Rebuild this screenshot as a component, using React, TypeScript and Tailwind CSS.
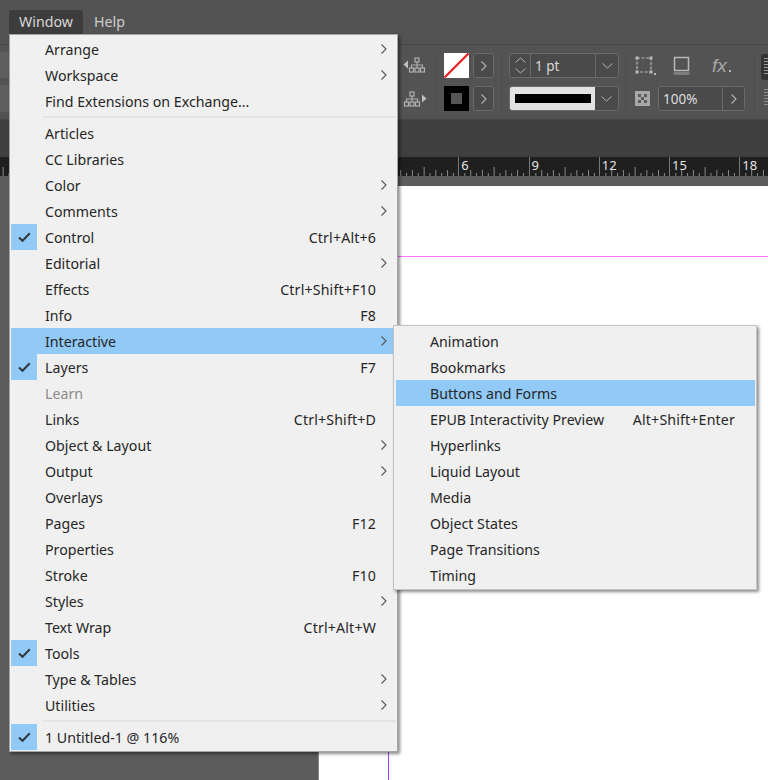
import React from "react";

type Item = { label: string; shortcut?: string; sub?: boolean; checked?: boolean; active?: boolean; disabled?: boolean };

const group1: Item[] = [
  { label: "Arrange", sub: true },
  { label: "Workspace", sub: true },
  { label: "Find Extensions on Exchange..." },
];
const group2: Item[] = [
  { label: "Articles" },
  { label: "CC Libraries" },
  { label: "Color", sub: true },
  { label: "Comments", sub: true },
  { label: "Control", shortcut: "Ctrl+Alt+6", checked: true },
  { label: "Editorial", sub: true },
  { label: "Effects", shortcut: "Ctrl+Shift+F10" },
  { label: "Info", shortcut: "F8" },
  { label: "Interactive", sub: true, active: true },
  { label: "Layers", shortcut: "F7", checked: true },
  { label: "Learn", disabled: true },
  { label: "Links", shortcut: "Ctrl+Shift+D" },
  { label: "Object & Layout", sub: true },
  { label: "Output", sub: true },
  { label: "Overlays" },
  { label: "Pages", shortcut: "F12" },
  { label: "Properties" },
  { label: "Stroke", shortcut: "F10" },
  { label: "Styles", sub: true },
  { label: "Text Wrap", shortcut: "Ctrl+Alt+W" },
  { label: "Tools", checked: true },
  { label: "Type & Tables", sub: true },
  { label: "Utilities", sub: true },
];
const group3: Item[] = [{ label: "1 Untitled-1 @ 116%", checked: true }];

const submenu: Item[] = [
  { label: "Animation" },
  { label: "Bookmarks" },
  { label: "Buttons and Forms", active: true },
  { label: "EPUB Interactivity Preview", shortcut: "Alt+Shift+Enter" },
  { label: "Hyperlinks" },
  { label: "Liquid Layout" },
  { label: "Media" },
  { label: "Object States" },
  { label: "Page Transitions" },
  { label: "Timing" },
];

function Chevron({ className = "" }: { className?: string }) {
  return (
    <svg width="8" height="12" viewBox="0 0 8 12" className={className}>
      <path d="M1.5 1.5 L6 6 L1.5 10.5" fill="none" stroke="currentColor" strokeWidth="1.1" />
    </svg>
  );
}

function Check() {
  return (
    <svg width="26" height="26" viewBox="0 0 26 26">
      <path d="M8 13.5 L11.5 16.8 L18.8 9.2" fill="none" stroke="#33383d" strokeWidth="2" />
    </svg>
  );
}

function Row({ item }: { item: Item }) {
  return (
    <div className={`flex h-[26px] items-center ${item.active ? "bg-[#91c9f7]" : ""}`}>
      <div className={`h-[26px] w-[26px] shrink-0 ${item.checked ? "bg-[#91c9f7]" : ""}`}>{item.checked && <Check />}</div>
      <span className={`ml-2 pt-[2px] ${item.disabled ? "text-[#8b8b8b]" : "text-[#262626]"}`}>{item.label}</span>
      {item.shortcut && <span className="ml-auto mr-[20px] pt-[2px] tracking-[0.15px] text-[#262626]">{item.shortcut}</span>}
      {item.sub && <Chevron className="ml-auto mr-[8px] text-[#555555]" />}
    </div>
  );
}

function Separator() {
  return <div className="my-[2px] ml-[32px] h-[2px] bg-[#e3e3e3]" />;
}

function Outline({ children, className = "" }: { children?: React.ReactNode; className?: string }) {
  return (
    <div className={`flex h-[25px] items-center justify-center rounded-[3px] border border-[#6a6a6a] bg-[#4a4a4a] text-[#b4b4b4] ${className}`}>
      {children}
    </div>
  );
}

function Tree({ dir }: { dir: "left" | "right" }) {
  return (
    <svg width="24" height="16" viewBox="0 0 24 16" fill="none" stroke="#b0b0b0" strokeWidth="1.2">
      {dir === "left" ? <path d="M0.5 7.5 L5 3.5 V11.5 Z" fill="#c0c0c0" stroke="none" /> : <path d="M19 3.5 L23.5 7.5 L19 11.5 Z" fill="#c0c0c0" stroke="none" />}
      <g transform={dir === "left" ? "translate(5 0)" : "translate(0 0)"}>
        <rect x="7" y="1" width="4" height="4" />
        <rect x="1.5" y="11" width="4" height="4" />
        <rect x="7" y="11" width="4" height="4" />
        <rect x="12.5" y="11" width="4" height="4" />
        <path d="M9 5 V11 M3.5 11 V8 H14.500 V11" />
      </g>
    </svg>
  );
}

function Ticks() {
  const n = 12;
  const step = 70.25 / n;
  return (
    <svg width="70.25" height="19" viewBox="0 0 70.25 19" className="block">
      {Array.from({ length: n }).map((_, i) =>
        i === 0 ? null : (
          <line key={i} x1={i * step} x2={i * step} y1={i === 6 ? 10 : i % 2 === 0 ? 13 : 16} y2={19} stroke="#8a8a8a" strokeWidth="1" />
        )
      )}
    </svg>
  );
}

function RulerCell({ label }: { label?: string }) {
  return (
    <div className="relative h-[19px] w-[70.25px] shrink-0 border-l border-[#777777]">
      <Ticks />
      {label && <span className="absolute left-[2px] top-[-1px] text-[13px] leading-[18px] text-[#e4e4e4]">{label}</span>}
    </div>
  );
}

const rulerLabels = ["", "", "", "", "", "", "", "", "6", "9", "12", "15", "18"];

export default function App() {
  return (
    <div className="relative h-[780px] w-[768px] overflow-hidden bg-[#5c5c5c] text-[14.2px] leading-[26px] [font-family:'Noto_Sans','Open_Sans',sans-serif]">
      {/* Application menu bar */}
      <div className="flex h-[44px] bg-[#535353] pl-[9px] pt-[10px] text-[#cfcfcf]">
        <div className="flex h-[24px] w-[74px] items-center justify-center rounded-t-[2px] bg-[#3d3d3d] text-[#d6d6d6]">Window</div>
        <div className="ml-[11px] flex h-[24px] items-center">Help</div>
      </div>

      {/* Control panel */}
      <div className="flex h-[76px] items-center border-t border-b border-[#474747] bg-[#535353]">
        <div className="flex h-[60px] w-[9px] shrink-0 flex-col justify-between">
          <div className="h-[26px] bg-[#5e5e5e]" />
          <div className="h-[27px] bg-[#5e5e5e]" />
        </div>
        <div className="ml-[393px] flex h-[58px] w-[34px] shrink-0 flex-col justify-between py-[4px] pl-px">
          <Tree dir="left" />
          <Tree dir="right" />
        </div>
        <div className="flex h-[58px] items-center border-l border-[#4c4c4c] pl-[7px]">
          <div className="flex flex-col gap-[8px]">
            <div className="flex gap-[4px]">
              <svg width="25" height="25" viewBox="0 0 25 25" className="bg-white">
                <path d="M0.500 24.500 L24.500 0.500" stroke="#ee1c1c" strokeWidth="2.2" />
              </svg>
              <Outline className="w-[21px]"><Chevron /></Outline>
            </div>
            <div className="flex gap-[4px]">
              <div className="flex h-[25px] w-[25px] items-center justify-center bg-black">
                <div className="h-[11px] w-[11px] bg-[#555555]" />
              </div>
              <Outline className="w-[21px]"><Chevron /></Outline>
            </div>
          </div>
        </div>
        <div className="ml-[7px] flex h-[58px] items-center border-l border-[#4c4c4c] pl-[7px]">
          <div className="flex flex-col gap-[8px]">
            <Outline className="w-[110px] justify-start">
              <div className="flex h-full w-[21px] shrink-0 flex-col items-center justify-center gap-[5px] border-r border-[#6a6a6a]">
                <svg width="11" height="6" viewBox="0 0 11 6"><path d="M0.500 5.500 L5.500 1 L10.500 5.500" fill="none" stroke="#b4b4b4" /></svg>
                <svg width="11" height="6" viewBox="0 0 11 6"><path d="M0.500 0.500 L5.500 5 L10.500 0.500" fill="none" stroke="#b4b4b4" /></svg>
              </div>
              <div className="flex-1 pl-[4px] text-[13.5px] text-[#d8d8d8]">1 pt</div>
              <div className="flex h-full w-[23px] shrink-0 items-center justify-center border-l border-[#6a6a6a]">
                <svg width="11" height="6" viewBox="0 0 11 6"><path d="M0.500 0.500 L5.500 5 L10.500 0.500" fill="none" stroke="#b4b4b4" /></svg>
              </div>
            </Outline>
            <Outline className="w-[110px] justify-start">
              <div className="flex h-full w-[85px] shrink-0 items-center justify-center rounded-l-[2px] bg-[#e2e2e2]">
                <div className="h-[9px] w-[76px] bg-black" />
              </div>
              <div className="flex h-full flex-1 items-center justify-center">
                <svg width="11" height="6" viewBox="0 0 11 6"><path d="M0.500 0.500 L5.500 5 L10.500 0.500" fill="none" stroke="#b4b4b4" /></svg>
              </div>
            </Outline>
          </div>
        </div>
        <div className="ml-[6px] flex h-[58px] items-center border-l border-[#4c4c4c] pl-[9px]">
          <div className="flex flex-col gap-[8px]">
            <div className="flex h-[25px] items-center text-[#b8b8b8]">
              <svg width="22" height="20" viewBox="0 0 22 20" fill="none" stroke="#b8b8b8">
                <rect x="2" y="2" width="14" height="14" strokeWidth="1.2" strokeDasharray="3 1.500" />
                <rect x="0.500" y="0.500" width="3" height="3" fill="#b8b8b8" stroke="none" />
                <rect x="14.500" y="0.500" width="3" height="3" fill="#b8b8b8" stroke="none" />
                <rect x="0.500" y="14.500" width="3" height="3" fill="#b8b8b8" stroke="none" />
                <rect x="14.500" y="14.500" width="3" height="3" fill="#b8b8b8" stroke="none" />
                <rect x="19" y="17" width="2" height="2" fill="#b8b8b8" stroke="none" />
              </svg>
              <svg width="18" height="20" viewBox="0 0 18 20" fill="none" className="ml-[16px]">
                <rect x="1.500" y="1.500" width="14" height="13" stroke="#b8b8b8" strokeWidth="1.500" />
                <rect x="0.500" y="16" width="16" height="3" fill="#7d7d7d" />
              </svg>
              <span className="ml-[21px] text-[19px] italic text-[#a8a8a8] [font-family:'Liberation_Sans',sans-serif]">fx</span>
              <span className="ml-[2px] mt-[10px] h-[2px] w-[2px] bg-[#b8b8b8]" />
            </div>
            <div className="flex items-center">
              <svg width="15" height="15" viewBox="0 0 15 15">
                <rect width="15" height="15" fill="#a8a8a8" />
                <rect x="3" y="3" width="3" height="3" fill="#5c5c5c" />
                <rect x="9" y="3" width="3" height="3" fill="#5c5c5c" />
                <rect x="6" y="6" width="3" height="3" fill="#5c5c5c" />
                <rect x="3" y="9" width="3" height="3" fill="#5c5c5c" />
                <rect x="9" y="9" width="3" height="3" fill="#5c5c5c" />
              </svg>
              <Outline className="ml-[8px] w-[87px] justify-start">
                <div className="flex-1 pl-[4px] text-[13.5px] text-[#dedede]">100%</div>
                <div className="flex h-full w-[22px] shrink-0 items-center justify-center border-l border-[#6a6a6a]"><Chevron /></div>
              </Outline>
            </div>
          </div>
        </div>
        <div className="ml-[9px] flex h-[58px] flex-col justify-between border-l border-[#4c4c4c] pl-[6px]">
          <div className="mt-[1px] flex h-[26px] w-[8px] items-center rounded-l-[3px] bg-[#333333] pl-[3px]">
            <div className="h-[18px] w-[5px] bg-[repeating-linear-gradient(#9a9a9a_0_1px,#333333_1px_3px)]" />
          </div>
          <div className="mb-[4px] ml-[3px] h-[18px] w-[5px] bg-[repeating-linear-gradient(#8c8c8c_0_1px,#535353_1px_3px)]" />
        </div>
      </div>

      {/* Tab well */}
      <div className="h-[37px] bg-[#3f3f3f]" />

      {/* Ruler */}
      <div className="ml-[-103.75px] flex h-[19px] bg-[#1f1f1f]">
        {rulerLabels.map((l, i) => <RulerCell key={i} label={l} />)}
      </div>

      {/* Pasteboard and page */}
      <div className="h-[10px] bg-[#5c5c5c]" />
      <div className="flex h-[594px]">
        <div className="w-[318px] shrink-0 bg-[#5c5c5c]" />
        <div className="flex flex-1 flex-col border-l border-[#8a8a8a] bg-white">
          <div className="h-[70px] shrink-0" />
          <div className="h-[1px] shrink-0 bg-[#ff70ff]" />
          <div className="ml-[69px] w-[1px] flex-1 bg-[#a040ff]" />
        </div>
      </div>

      {/* Window menu */}
      <div className="absolute left-[9px] top-[34px] w-[389px] border border-[#a5a5a5] bg-[#f0f0f0] px-px pb-px pt-[1px] shadow-[2px_2px_3px_rgba(0,0,0,0.45)]">
        {group1.map((i) => <Row key={i.label} item={i} />)}
        <Separator />
        {group2.map((i) => <Row key={i.label} item={i} />)}
        <Separator />
        {group3.map((i) => <Row key={i.label} item={i} />)}
      </div>

      {/* Interactive submenu */}
      <div className="absolute left-[393px] top-[325px] w-[364px] border border-[#c4c4c4] bg-[#f0f0f0] pb-px pl-[2px] pr-px pt-[2px] shadow-[2px_2px_3px_rgba(0,0,0,0.45)]">
        {submenu.map((i) => (
          <div key={i.label} className={`flex h-[26px] items-center pl-[34px] text-[#262626] ${i.active ? "bg-[#91c9f7]" : ""}`}>
            <span className="pt-[2px]">{i.label}</span>
            {i.shortcut && <span className="ml-auto mr-[20px] pt-[2px] tracking-[0.15px]">{i.shortcut}</span>}
          </div>
        ))}
      </div>
    </div>
  );
}
